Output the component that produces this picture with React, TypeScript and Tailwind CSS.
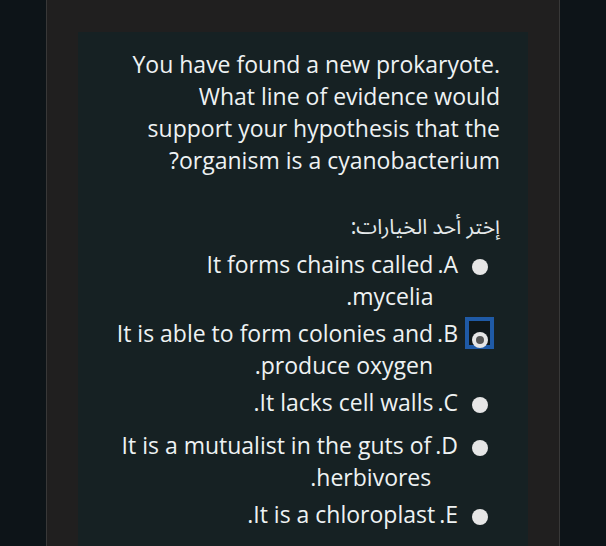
import { useState } from 'react';

type Option = { key: string; lines: string[]; extraTop?: string };

const OPTIONS: Option[] = [
  { key: 'A', lines: ['It forms chains called', 'mycelia.'] },
  { key: 'B', lines: ['It is able to form colonies and', 'produce oxygen.'] },
  { key: 'C', lines: ['It lacks cell walls.'] },
  { key: 'D', lines: ['It is a mutualist in the guts of', 'herbivores.'], extraTop: 'mt-[6px]' },
  { key: 'E', lines: ['It is a chloroplast.'] },
];

const QUESTION = [
  'You have found a new prokaryote.',
  'What line of evidence would',
  'support your hypothesis that the',
  'organism is a cyanobacterium',
];

function Radio({ checked, focused }: { checked: boolean; focused: boolean }) {
  return (
    <span
      className={`flex h-[32px] w-[29px] shrink-0 items-start justify-center pt-[11px] ${
        focused ? 'border-[4px] border-[#1f5aa6] bg-[#0f171a] pt-[7px]' : ''
      }`}
    >
      <span className="flex h-[16px] w-[16px] items-center justify-center rounded-full bg-[#e6e6e6]">
        {checked && <span className="h-[8px] w-[8px] rounded-full bg-[#555555]" />}
      </span>
    </span>
  );
}

export default function App() {
  const [selected, setSelected] = useState('B');

  return (
    <div className="flex h-[546px] w-full overflow-hidden bg-[#0d1418]">
      <div className="ml-[46px] flex w-[514px] flex-col border-x border-[#383838] bg-[#201f1f] px-[31px] pt-[32px]">
        <div
          dir="rtl"
          className="flex-1 bg-[#162123] pr-[28px] pt-[16px] text-[#eef2f3]"
          style={{ fontFamily: '"Open Sans", "DejaVu Sans", sans-serif' }}
        >
          <p className="text-[23px] leading-[32px]">
            {QUESTION.map((line, i) => (
              <span key={i}>
                <span className="whitespace-nowrap">{line}</span>
                {i < QUESTION.length - 1 ? ' ' : '?'}
              </span>
            ))}
          </p>

          <p
            className="mt-[35px] text-[21px] leading-[32px] text-[#e4e9ea]"
            style={{ fontFamily: '"Noto Sans Arabic", "DejaVu Sans", sans-serif' }}
          >
            إختر أحد الخيارات:
          </p>

          <div className="mt-[5px] flex flex-col gap-[5px]">
            {OPTIONS.map((opt) => (
              <label
                key={opt.key}
                className={`flex cursor-pointer items-start text-[23px] leading-[32px] ${opt.extraTop ?? ''}`}
                onClick={() => setSelected(opt.key)}
              >
                <span className="mr-[6px]">
                  <Radio checked={selected === opt.key} focused={selected === opt.key} />
                </span>
                <span className="mr-[7px] shrink-0">{opt.key}.</span>
                <span className="mr-[4px] text-right">
                  {opt.lines.map((line, i) => (
                    <span key={i} className="block whitespace-nowrap">
                      {line}
                    </span>
                  ))}
                </span>
              </label>
            ))}
          </div>
        </div>
      </div>
    </div>
  );
}
